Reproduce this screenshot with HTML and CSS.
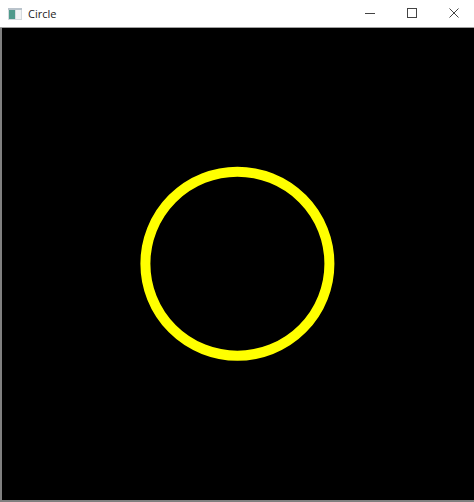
FILE: index.html
```html
<!DOCTYPE html>
<html lang="en">
  <head>
    <meta charset="UTF-8" />
    <title>Circle</title>
    <link rel="stylesheet" href="styles.css">
  </head>
  <body>
    <main class="window">
      <header class="titlebar">
        <svg class="app-icon" viewBox="0 0 14 12" width="14" height="12">
          <rect width="14" height="12" fill="#d5dbdf" />
          <rect y="0" width="14" height="2" fill="#b9c3cb" />
          <rect x="1" y="2" width="6" height="9" fill="#4f9a8c" />
          <rect x="8" y="2" width="5" height="9" fill="#f1f3f4" />
        </svg>
        <span class="title">Circle</span>
        <div class="controls">
          <button class="control">
            <svg viewBox="0 0 10 10" width="10" height="10"><path d="M0 5.5H10" stroke="#444" fill="none" /></svg>
          </button>
          <button class="control">
            <svg viewBox="0 0 10 10" width="10" height="10"><rect x="0.5" y="0.5" width="9" height="9" stroke="#444" fill="none" /></svg>
          </button>
          <button class="control">
            <svg viewBox="0 0 10 10" width="10" height="10"><path d="M0.5 0.5L9.5 9.5M9.5 0.5L0.5 9.5" stroke="#444" fill="none" /></svg>
          </button>
        </div>
      </header>
      <section class="canvas">
        <svg class="drawing" viewBox="0 0 472 472" width="472" height="472">
          <circle cx="235.4" cy="235.7" r="92" fill="none" stroke="#ffff00" stroke-width="10" />
        </svg>
      </section>
    </main>
  </body>
</html>
```

FILE: styles.css
```css
html,
body {
  height: 100%;
}
body {
  margin: 0;
  background-color: #fff;
  font-family: "Open Sans", "Liberation Sans", sans-serif;
}
.window {
  display: flex;
  flex-direction: column;
  height: 100%;
}
.titlebar {
  display: flex;
  align-items: center;
  flex: none;
  height: 27px;
  padding-left: 8px;
  background-color: #fff;
  border-bottom: 1px solid #a0a0a0;
}
.app-icon {
  margin-right: 6px;
}
.title {
  font-size: 11px;
  color: #222;
}
.controls {
  display: flex;
  align-self: flex-start;
  margin-left: auto;
}
.control {
  display: flex;
  justify-content: center;
  align-items: center;
  box-sizing: border-box;
  width: 42px;
  height: 26px;
  padding: 0 0 0 1px;
  border: 0;
  background: none;
}
.canvas {
  flex: 1;
  min-height: 0;
  background-color: #000;
  border-left: 2px solid #808080;
  border-bottom: 2px solid #808080;
  overflow: hidden;
}
.drawing {
  display: block;
}
```
